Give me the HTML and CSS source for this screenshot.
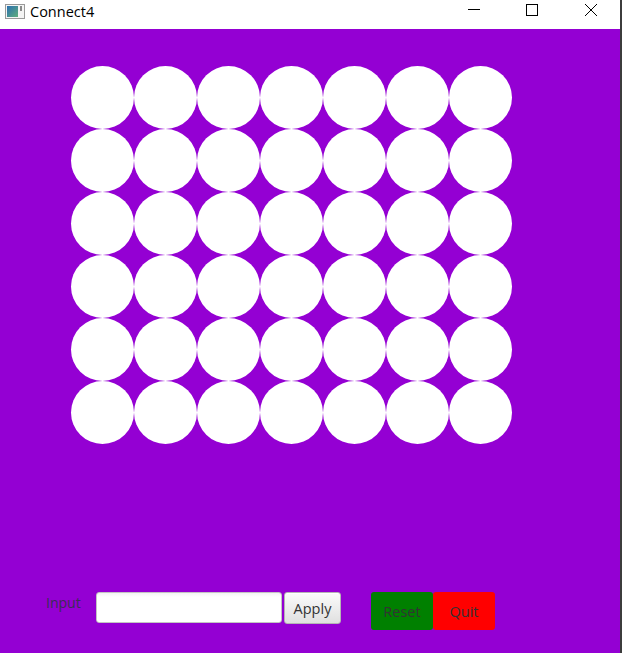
FILE: index.html
```html
<!DOCTYPE html>
<html>
<head>
<meta charset="utf-8">
<title>Connect4</title>
<link rel="stylesheet" href="styles.css">
</head>
<body>
<div class="window">
  <div class="titlebar">
    <svg class="app-icon" width="20" height="15" viewBox="0 0 20 15">
      <defs>
        <linearGradient id="g" x1="0" y1="0" x2="1" y2="1">
          <stop offset="0" stop-color="#2b6fb0"/>
          <stop offset="1" stop-color="#5fae7c"/>
        </linearGradient>
      </defs>
      <rect x="0.5" y="0.5" width="19" height="14" fill="#f4f4f4" stroke="#9a9a9a"/>
      <rect x="2" y="2" width="11" height="11" fill="url(#g)"/>
      <rect x="15" y="2" width="2" height="5" fill="#8a8a8a"/>
    </svg>
    <span class="title">Connect4</span>
    <div class="win-controls">
      <div class="win-btn min"><svg width="12" height="12" viewBox="0 0 12 12"><line x1="0" y1="5.5" x2="12" y2="5.5" stroke="#000" stroke-width="1"/></svg></div>
      <div class="win-btn max"><svg width="12" height="12" viewBox="0 0 12 12"><rect x="0.5" y="0.5" width="11" height="11" fill="none" stroke="#000" stroke-width="1"/></svg></div>
      <div class="win-btn close"><svg width="12" height="12" viewBox="0 0 12 12"><path d="M0 0 L12 12 M12 0 L0 12" stroke="#000" stroke-width="1"/></svg></div>
    </div>
  </div>
  <div class="content">
    <div class="board">
      <div class="cell"></div><div class="cell"></div><div class="cell"></div><div class="cell"></div><div class="cell"></div><div class="cell"></div><div class="cell"></div>
      <div class="cell"></div><div class="cell"></div><div class="cell"></div><div class="cell"></div><div class="cell"></div><div class="cell"></div><div class="cell"></div>
      <div class="cell"></div><div class="cell"></div><div class="cell"></div><div class="cell"></div><div class="cell"></div><div class="cell"></div><div class="cell"></div>
      <div class="cell"></div><div class="cell"></div><div class="cell"></div><div class="cell"></div><div class="cell"></div><div class="cell"></div><div class="cell"></div>
      <div class="cell"></div><div class="cell"></div><div class="cell"></div><div class="cell"></div><div class="cell"></div><div class="cell"></div><div class="cell"></div>
      <div class="cell"></div><div class="cell"></div><div class="cell"></div><div class="cell"></div><div class="cell"></div><div class="cell"></div><div class="cell"></div>
    </div>
    <div class="controls-row">
      <span class="input-label">Input</span>
      <input class="text-field" type="text">
      <button class="apply">Apply</button>
      <div class="game-buttons">
        <button class="game-btn reset">Reset</button>
        <button class="game-btn quit">Quit</button>
      </div>
    </div>
  </div>
</div>
</body>
</html>
```

FILE: styles.css
```css
html, body {
  margin: 0;
  padding: 0;
  background: #9400d3;
}

body {
  font-family: "Open Sans", "Noto Sans", sans-serif;
}

.window {
  width: 620px;
  height: 653px;
  border-right: 2px solid #3c3c3c;
  display: flex;
  flex-direction: column;
  overflow: hidden;
}

.titlebar {
  height: 29px;
  background: #ffffff;
  display: flex;
  align-items: center;
  flex-shrink: 0;
}

.app-icon {
  margin-left: 5px;
  margin-top: -6px;
  display: block;
}

.title {
  margin-left: 5px;
  font-size: 14.5px;
  color: #000;
  margin-top: -6px;
}

.win-controls {
  margin-left: auto;
  display: flex;
  height: 29px;
}

.win-btn {
  width: 58px;
  height: 29px;
  display: flex;
  justify-content: center;
  align-items: flex-start;
}

.win-btn svg {
  display: block;
  margin-top: 4px;
}

.win-btn.min {
  padding-right: 2px;
  width: 56px;
}

.win-btn.max {
  padding-right: 3px;
  width: 55px;
}

.win-btn.close {
  width: 58px;
}

.content {
  flex: 1;
  background: #9400d3;
  display: flex;
  flex-direction: column;
}

.board {
  margin-top: 37px;
  margin-left: 71px;
  display: grid;
  grid-template-columns: repeat(7, 63px);
  grid-auto-rows: 63px;
  width: 441px;
}

.cell {
  width: 63px;
  height: 63px;
  border-radius: 50%;
  background: #ffffff;
}

.controls-row {
  margin-top: 147px;
  display: flex;
  align-items: flex-start;
}

.input-label {
  margin-left: 46px;
  width: 50px;
  font-size: 14px;
  line-height: 20px;
  margin-top: 2px;
  color: #3a2d55;
}

.text-field {
  box-sizing: border-box;
  width: 186px;
  height: 31px;
  margin: 1px 0 0 0;
  padding: 0 6px;
  border: 1px solid #c4c4c4;
  border-radius: 3px;
  background: linear-gradient(#f4f4f4 0px, #ffffff 4px, #ffffff 100%);
  font-family: inherit;
  font-size: 14px;
  outline: none;
}

.apply {
  box-sizing: border-box;
  width: 57px;
  height: 32px;
  margin: 1px 0 0 2px;
  padding: 0;
  border: 1px solid #b5b5b5;
  border-radius: 3px;
  background: linear-gradient(#fbfbfb, #e0e0e0);
  box-shadow: inset 0 1px 0 #ffffff;
  font-family: inherit;
  font-size: 14.5px;
  color: #333;
}

.game-buttons {
  margin-left: 30px;
  margin-top: 1px;
  display: flex;
}

.game-btn {
  box-sizing: border-box;
  width: 62px;
  height: 38px;
  padding: 0;
  border: none;
  border-radius: 3px;
  font-family: inherit;
  font-size: 14.5px;
  color: #333;
}

.reset {
  background: #008000;
}

.quit {
  background: #ff0000;
}
```
